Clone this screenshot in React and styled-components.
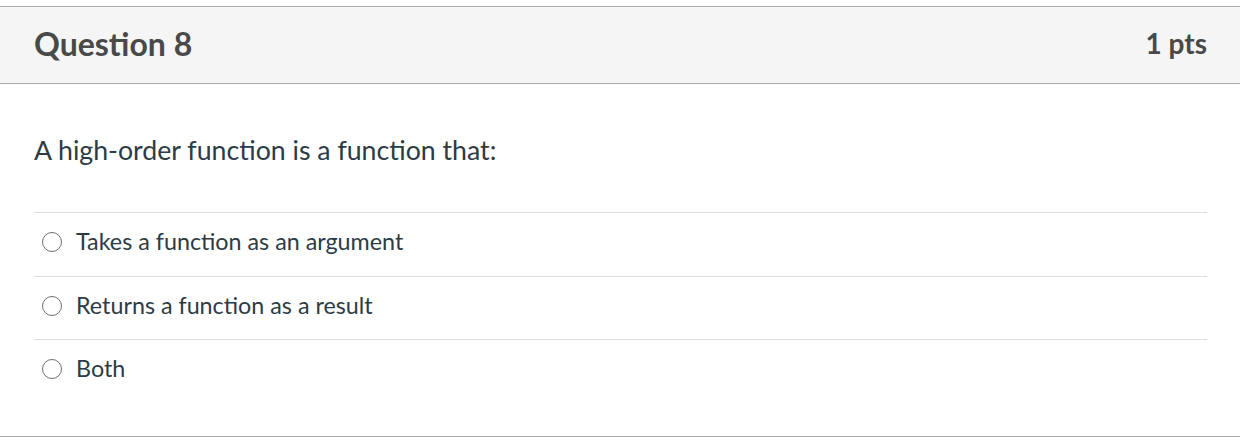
import React from 'react';
import styled, { createGlobalStyle } from 'styled-components';

const GlobalStyle = createGlobalStyle`
  body {
    margin: 0;
    background: #fff;
    font-family: Lato, "Open Sans", sans-serif;
  }
`

const Panel = styled.section`
  margin-top: 6px;
  border-top: 1px solid #aaaaaa;
  border-bottom: 1px solid #aaaaaa;
  height: 431px;
  box-sizing: border-box;
`

const Header = styled.header`
  display: flex;
  justify-content: space-between;
  align-items: center;
  height: 77px;
  box-sizing: border-box;
  padding: 0 33px 4px 34px;
  background: #f5f5f5;
  border-bottom: 1px solid #aaaaaa;
  color: #494949;
`

const Title = styled.h2`
  margin: 0;
  font-size: 32px;
  font-weight: 700;
`

const Points = styled.span`
  font-size: 28px;
  font-weight: 700;
`

const Body = styled.div`
  padding: 48px 33px 0 34px;
  color: #2d3b45;
`

const Prompt = styled.p`
  margin: 0 0 44px;
  font-size: 26.7px;
  line-height: 36px;
`

const Answers = styled.div`
  display: flex;
  flex-direction: column;
`

const Answer = styled.label`
  display: flex;
  align-items: center;
  gap: 14px;
  height: 63px;
  box-sizing: border-box;
  padding: 0 0 7px 8px;
  border-top: 1px solid #dddddd;
  font-size: 23.3px;
  color: #2d3b45;
  &:first-child {
    height: 64px;
  }
`

const Radio = styled.span`
  width: 18px;
  height: 18px;
  margin-top: 2px;
  border: 1.5px solid #707070;
  border-radius: 50%;
  flex-shrink: 0;
`

const options = [
  'Takes a function as an argument',
  'Returns a function as a result',
  'Both',
]

export default function App() {
  return (
    <>
      <GlobalStyle />
      <Panel>
        <Header>
          <Title>Question 8</Title>
          <Points>1 pts</Points>
        </Header>
        <Body>
          <Prompt>A high-order function is a function that:</Prompt>
          <Answers>
            {options.map(o => (
              <Answer key={o}>
                <Radio />
                {o}
              </Answer>
            ))}
          </Answers>
        </Body>
      </Panel>
    </>
  )
}
